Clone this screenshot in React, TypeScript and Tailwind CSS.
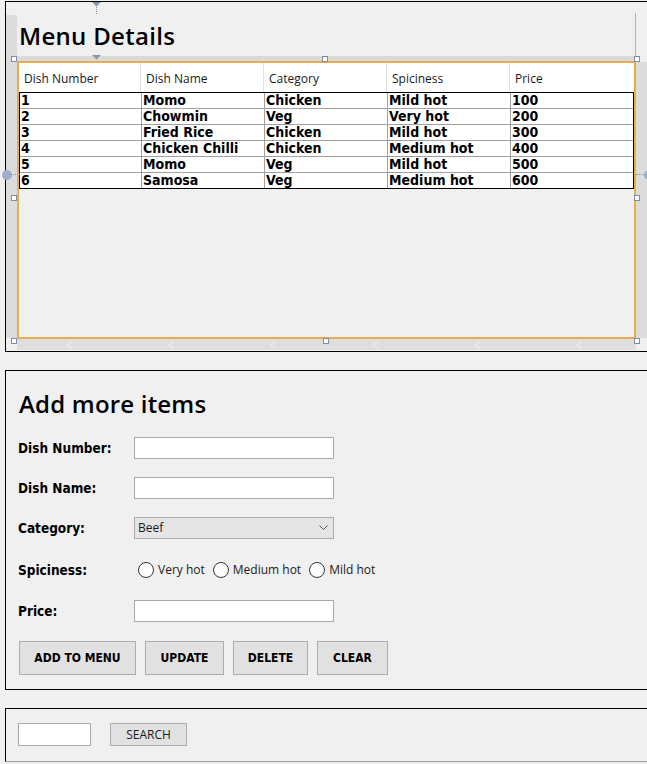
import React from "react";

const rows = [
  ["1", "Momo", "Chicken", "Mild hot", "100"],
  ["2", "Chowmin", "Veg", "Very hot", "200"],
  ["3", "Fried Rice", "Chicken", "Mild hot", "300"],
  ["4", "Chicken Chilli", "Chicken", "Medium hot", "400"],
  ["5", "Momo", "Veg", "Mild hot", "500"],
  ["6", "Samosa", "Veg", "Medium hot", "600"],
];
const headers = ["Dish Number", "Dish Name", "Category", "Spiciness", "Price"];
const colW = ["w-[122px]", "w-[123px]", "w-[123px]", "w-[123px]", "w-[122px]"];

function Handle({ cls }: { cls: string }) {
  return <div className={`absolute w-[6px] h-[6px] bg-white border border-[#7d8ea6] ${cls}`} />;
}

function Chev() {
  return (
    <svg width="10" height="10" viewBox="0 0 10 10" className="block">
      <path d="M7 1 L2 5 L7 9" fill="none" stroke="#ececec" strokeWidth="1.2" />
    </svg>
  );
}

function Radio({ label }: { label: string }) {
  return (
    <label className="flex items-center gap-[4px]">
      <span className="w-[16px] h-[16px] rounded-full border border-[#333] bg-white block" />
      <span className="text-[12px] text-[#1a1a1a]">{label}</span>
    </label>
  );
}

export default function App() {
  const sans = "font-['Open_Sans',sans-serif]";
  const bold = "font-['DejaVu_Sans_Condensed','DejaVu_Sans',sans-serif] font-bold";
  return (
    <div className={`w-[647px] h-[764px] overflow-hidden bg-[#f0f0f0] text-black ${sans}`}>
      {/* Panel 1 */}
      <div className="ml-[5px] mt-[1px] w-[700px] h-[351px] border border-black relative">
        <div className="h-[13px]" />
        <div className="flex">
          <div className="w-[11px] h-[323px] bg-[#dcdcdc]" />
          <div className="w-[619px] flex flex-col">
            <div className="h-[41px] flex items-center pl-[2px]">
              <h1 className="text-[24px] font-semibold leading-none tracking-[0.3px]">Menu Details</h1>
            </div>
            <div className="h-[5px] bg-[#dadada]" />
            <div className="h-[278px] border-2 border-[#e8ad4c] bg-[#f0f0f0] flex flex-col">
              <div className="h-[29px] bg-white flex">
                {headers.map((h, i) => (
                  <div
                    key={h}
                    className={`${colW[i]} h-full flex items-center pt-[3px] pl-[5px] text-[12px] text-[#1a1a1a] ${i < 4 ? "border-r border-[#e2e2e2]" : ""}`}
                  >
                    {h}
                  </div>
                ))}
              </div>
              <div className="w-[615px] border border-black bg-white">
                {rows.map((r, ri) => (
                  <div
                    key={ri}
                    className={`flex ${ri < 5 ? "h-[16px] border-b border-[#a0a0a0]" : "h-[15px]"}`}
                  >
                    {r.map((c, ci) => (
                      <div
                        key={ci}
                        className={`${ci === 0 || ci === 4 ? "w-[122px]" : "w-[123px]"} ${ci < 4 ? "border-r border-[#a0a0a0]" : ""} h-full pl-[1px] text-[14px] leading-[15px] ${bold}`}
                      >
                        {c}
                      </div>
                    ))}
                  </div>
                ))}
              </div>
            </div>
            <div className="h-[11px] bg-[#dedede] flex items-center">
              <div className="flex gap-[92px] pl-[48px]">
                <Chev /><Chev /><Chev /><Chev /><Chev /><Chev />
              </div>
            </div>
          </div>
          <div className="w-[11px] h-[276px] mt-[47px] bg-[#dcdcdc]" />
        </div>

        {/* design-time overlays */}
        <div className="absolute left-[629px] top-[11px] w-[1px] h-[44px] bg-[#9fb3d1]" />
        <svg className="absolute left-[86px] top-[0px]" width="9" height="12" viewBox="0 0 9 12">
          <path d="M0 0 L9 0 L4.5 4.5 Z" fill="#8796aa" />
          <path d="M4.5 5 L4.5 12" stroke="#8796aa" strokeWidth="1" strokeDasharray="1 1" />
        </svg>
        <svg className="absolute left-[86px] top-[53px]" width="9" height="5" viewBox="0 0 9 5">
          <path d="M0 0 L9 0 L4.5 4.5 Z" fill="#8796aa" />
        </svg>
        <div className="absolute left-[-4px] top-[168px] w-[10px] h-[10px] rounded-full bg-[#9bb0cc]" />
        <div className="absolute left-[4px] top-[172px] w-[10px] border-t border-dotted border-[#8796aa]" />
        <div className="absolute left-[630px] top-[172px] w-[8px] border-t border-dotted border-[#8796aa]" />
        <div className="absolute left-[638px] top-[168px] w-[10px] h-[10px] rounded-full bg-[#9bb0cc]" />
        <Handle cls="left-[5px] top-[54px]" />
        <Handle cls="left-[316px] top-[54px]" />
        <Handle cls="left-[628px] top-[54px]" />
        <Handle cls="left-[5px] top-[193px]" />
        <Handle cls="left-[628px] top-[193px]" />
        <Handle cls="left-[5px] top-[336px]" />
        <Handle cls="left-[317px] top-[336px]" />
        <Handle cls="left-[628px] top-[336px]" />
      </div>

      {/* Panel 2 */}
      <div className="ml-[5px] mt-[18px] w-[700px] h-[320px] border border-black pl-[12px]">
        <h2 className="mt-[21px] text-[24px] font-semibold leading-none tracking-[0.2px] pl-[1px]">Add more items</h2>
        <div className="mt-[21px] flex flex-col">
          {[
            ["Dish Number:", "input"],
            ["Dish Name:", "input"],
            ["Category:", "select"],
            ["Spiciness:", "radio"],
            ["Price:", "input"],
          ].map(([label, kind], i) => (
            <div key={i} className={`flex items-center h-[22px] ${i === 0 ? "" : i === 3 ? "mt-[20px]" : i === 4 ? "mt-[19px]" : "mt-[18px]"}`}>
              <div className={`w-[116px] text-[13.5px] ${bold}`}>{label}</div>
              {kind === "input" && <div className="w-[200px] h-[22px] bg-white border border-[#a9a9a9]" />}
              {kind === "select" && (
                <div className="w-[200px] h-[22px] bg-[#e5e5e5] border border-[#acacac] flex items-center justify-between pl-[3px] pr-[5px]">
                  <span className="text-[12px] text-[#1a1a1a]">Beef</span>
                  <svg width="9" height="6" viewBox="0 0 9 6">
                    <path d="M0.5 0.5 L4.5 4.5 L8.5 0.5" fill="none" stroke="#555" strokeWidth="1" />
                  </svg>
                </div>
              )}
              {kind === "radio" && (
                <div className="flex items-center gap-[8px] pl-[4px]">
                  <Radio label="Very hot" />
                  <Radio label="Medium hot" />
                  <Radio label="Mild hot" />
                </div>
              )}
            </div>
          ))}
        </div>
        <div className="mt-[19px] flex gap-[9px] pl-[1px]">
          {[
            ["ADD TO MENU", "w-[117px]"],
            ["UPDATE", "w-[79px]"],
            ["DELETE", "w-[75px]"],
            ["CLEAR", "w-[71px]"],
          ].map(([t, w]) => (
            <button key={t} className={`${w} h-[34px] bg-[#e1e1e1] border border-[#adadad] text-[12px] ${bold}`}>
              {t}
            </button>
          ))}
        </div>
      </div>

      {/* Panel 3 */}
      <div className="ml-[5px] mt-[18px] w-[700px] h-[54px] border border-black border-b-[#a0a0a0] pl-[12px] pt-[14px] flex gap-[19px]">
        <div className="w-[73px] h-[23px] bg-white border border-[#a9a9a9]" />
        <button className="w-[77px] h-[23px] bg-[#e1e1e1] border border-[#adadad] text-[12px] text-[#1a1a1a]">SEARCH</button>
      </div>
    </div>
  );
}
